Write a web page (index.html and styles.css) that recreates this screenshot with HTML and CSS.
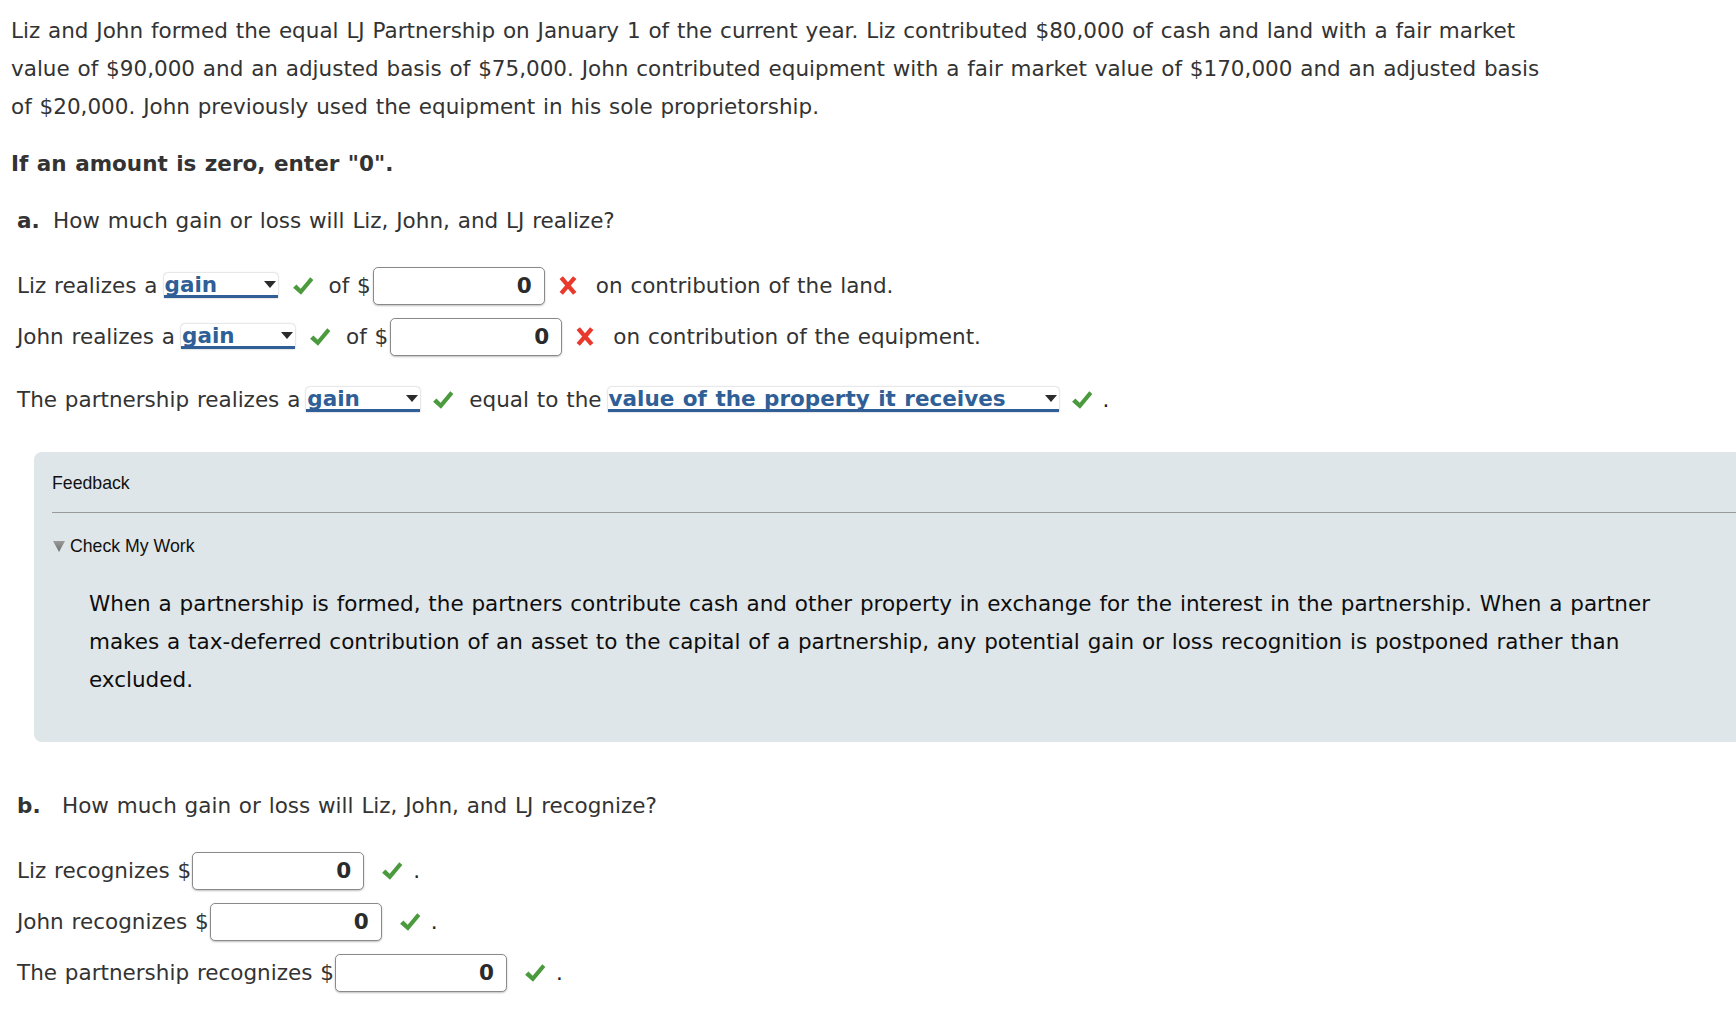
FILE: index.html
```html
<!DOCTYPE html>
<html lang="en">
<head>
<meta charset="utf-8">
<title>LJ Partnership</title>
<link rel="stylesheet" href="styles.css">
</head>
<body>
<div class="page">
  <p class="intro">Liz and John formed the equal LJ Partnership on January 1 of the current year. Liz contributed $80,000 of cash and land with a fair market value of $90,000 and an adjusted basis of $75,000. John contributed equipment with a fair market value of $170,000 and an adjusted basis of $20,000. John previously used the equipment in his sole proprietorship.</p>
  <p class="note">If an amount is zero, enter "0".</p>

  <section class="part">
    <h3 class="q"><span class="q-label label-a">a.</span>How much gain or loss will Liz, John, and LJ realize?</h3>
    <div class="rows">
      <div class="row">
        <span>Liz realizes a</span>
        <span class="dd dd-short"><span class="dd-val">gain</span><svg class="caret" viewBox="0 0 12 7"><path d="M0 0H12L6 7Z"/></svg></span>
        <svg class="ok" viewBox="0 0 20 20"><path d="M1 11.5L4 8.6L7.9 12.6L16.6 2L19.4 4.6L8.2 18Z"/></svg>
        <span class="gap-l">of $</span>
        <span class="amt">0</span>
        <svg class="bad" viewBox="0 0 16 16"><path d="M2 1L14 15M14 1L2 15"/></svg>
        <span class="gap-x">on contribution of the land.</span>
      </div>
      <div class="row">
        <span>John realizes a</span>
        <span class="dd dd-short"><span class="dd-val">gain</span><svg class="caret" viewBox="0 0 12 7"><path d="M0 0H12L6 7Z"/></svg></span>
        <svg class="ok" viewBox="0 0 20 20"><path d="M1 11.5L4 8.6L7.9 12.6L16.6 2L19.4 4.6L8.2 18Z"/></svg>
        <span class="gap-l">of $</span>
        <span class="amt">0</span>
        <svg class="bad" viewBox="0 0 16 16"><path d="M2 1L14 15M14 1L2 15"/></svg>
        <span class="gap-x">on contribution of the equipment.</span>
      </div>
      <div class="row row-sep">
        <span>The partnership realizes a</span>
        <span class="dd dd-short"><span class="dd-val">gain</span><svg class="caret" viewBox="0 0 12 7"><path d="M0 0H12L6 7Z"/></svg></span>
        <svg class="ok ok-tight" viewBox="0 0 20 20"><path d="M1 11.5L4 8.6L7.9 12.6L16.6 2L19.4 4.6L8.2 18Z"/></svg>
        <span class="gap-l">equal to the</span>
        <span class="dd dd-long"><span class="dd-val">value of the property it receives</span><svg class="caret" viewBox="0 0 12 7"><path d="M0 0H12L6 7Z"/></svg></span>
        <svg class="ok ok-tight" viewBox="0 0 20 20"><path d="M1 11.5L4 8.6L7.9 12.6L16.6 2L19.4 4.6L8.2 18Z"/></svg>
        <span class="dot">.</span>
      </div>
    </div>
  </section>

  <div class="feedback">
    <div class="fb-title">Feedback</div>
    <hr class="fb-rule">
    <div class="fb-toggle"><svg class="tri" viewBox="0 0 12 11"><defs><linearGradient id="tg" x1="0" y1="0" x2="0" y2="1"><stop offset="0" stop-color="#9a9a9a"/><stop offset="1" stop-color="#6f6f6f"/></linearGradient></defs><path d="M0 0H12L6 11Z" fill="url(#tg)"/></svg><span>Check My Work</span></div>
    <p class="fb-text">When a partnership is formed, the partners contribute cash and other property in exchange for the interest in the partnership. When a partner makes a tax-deferred contribution of an asset to the capital of a partnership, any potential gain or loss recognition is postponed rather than excluded.</p>
  </div>

  <section class="part part-b">
    <h3 class="q"><span class="q-label label-b">b.</span>How much gain or loss will Liz, John, and LJ recognize?</h3>
    <div class="rows">
      <div class="row">
        <span>Liz recognizes $</span>
        <span class="amt amt-tight">0</span>
        <svg class="ok ok-wide" viewBox="0 0 20 20"><path d="M1 11.5L4 8.6L7.9 12.6L16.6 2L19.4 4.6L8.2 18Z"/></svg>
        <span class="dot">.</span>
      </div>
      <div class="row">
        <span>John recognizes $</span>
        <span class="amt amt-tight">0</span>
        <svg class="ok ok-wide" viewBox="0 0 20 20"><path d="M1 11.5L4 8.6L7.9 12.6L16.6 2L19.4 4.6L8.2 18Z"/></svg>
        <span class="dot">.</span>
      </div>
      <div class="row">
        <span>The partnership recognizes $</span>
        <span class="amt amt-tight">0</span>
        <svg class="ok ok-wide" viewBox="0 0 20 20"><path d="M1 11.5L4 8.6L7.9 12.6L16.6 2L19.4 4.6L8.2 18Z"/></svg>
        <span class="dot">.</span>
      </div>
    </div>
  </section>
</div>
</body>
</html>
```

FILE: styles.css
```css
html, body {
  margin: 0;
  padding: 0;
  background: #ffffff;
  overflow-x: hidden;
}

body {
  font-family: "DejaVu Sans", Verdana, sans-serif;
  font-size: 21.5px;
  word-spacing: 1px;
  color: #333333;
}

.page {
  padding: 12px 0 40px 11px;
}

.intro {
  margin: 0;
  max-width: 1556px;
  line-height: 38px;
}

.note {
  margin: 19px 0 0;
  line-height: 38px;
  font-weight: bold;
}

.part {
  padding-left: 6px;
}

.q {
  margin: 19px 0 0;
  font-size: 21.5px;
  font-weight: normal;
  line-height: 38px;
  display: flex;
}

.q-label {
  font-weight: bold;
}

.label-a { width: 36px; }
.label-b { width: 45px; }

.rows {
  margin-top: 20px;
}

.row {
  display: flex;
  align-items: center;
  height: 51px;
  white-space: nowrap;
}

.row-sep {
  margin-top: 12px;
}

.dd {
  display: inline-flex;
  align-items: flex-start;
  justify-content: space-between;
  box-sizing: border-box;
  height: 25px;
  margin-left: 6px;
  padding: 0 2px 0 1px;
  background: #ffffff;
  border-bottom: 3px solid #2f5f96;
  border-radius: 4px 4px 0 0;
  box-shadow: 0 0 2px rgba(0, 0, 0, 0.35);
  color: #2f5f96;
  font-weight: bold;
  line-height: 23px;
}

.dd-short { width: 114px; }
.dd-long { width: 451px; }

.caret {
  width: 12px;
  height: 7px;
  margin-top: 8px;
  fill: #2b2b2b;
  flex: none;
}

.ok {
  width: 22px;
  height: 22px;
  margin-left: 14px;
  fill: #4b9a3d;
  flex: none;
}

.ok-tight { margin-left: 12px; }
.ok-wide { margin-left: 17px; }

.bad {
  width: 18px;
  height: 19px;
  margin-left: 14px;
  stroke: #e8392d;
  stroke-width: 3.9;
  fill: none;
  flex: none;
}

.gap-l { margin-left: 15px; }
.gap-x { margin-left: 19px; }

.amt {
  box-sizing: border-box;
  width: 172px;
  height: 38px;
  margin-left: 2px;
  padding-right: 12px;
  border: 1px solid #8a8a8a;
  border-radius: 5px;
  box-shadow: 0 1px 2px rgba(0, 0, 0, 0.25);
  background: #ffffff;
  font-weight: bold;
  text-align: right;
  line-height: 36px;
  color: #2b2b2b;
}

.amt-tight { margin-left: 1px; }

.dot {
  margin-left: 10px;
  color: #222222;
}

.feedback {
  margin: 27px -80px 0 23px;
  padding: 2px 0 43px 18px;
  background: #dfe6e9;
  border-radius: 8px;
}

.fb-title {
  font-family: "Liberation Sans", Arial, sans-serif;
  font-size: 17.7px;
  word-spacing: 0;
  line-height: 58px;
  color: #111111;
}

.fb-rule {
  margin: 0;
  border: 0;
  border-top: 1px solid #9a9a9a;
  height: 0;
}

.fb-toggle {
  display: flex;
  align-items: center;
  margin-top: 21px;
  height: 24px;
  font-family: "Liberation Sans", Arial, sans-serif;
  font-size: 17.7px;
  word-spacing: 0;
  color: #111111;
}

.tri {
  width: 12px;
  height: 11px;
  margin: 0 5px 0 1px;
}

.fb-text {
  margin: 27px 0 0;
  padding-left: 37px;
  max-width: 1600px;
  line-height: 38px;
  color: #0d0d0d;
}

.part-b .q {
  margin-top: 45px;
}
```
